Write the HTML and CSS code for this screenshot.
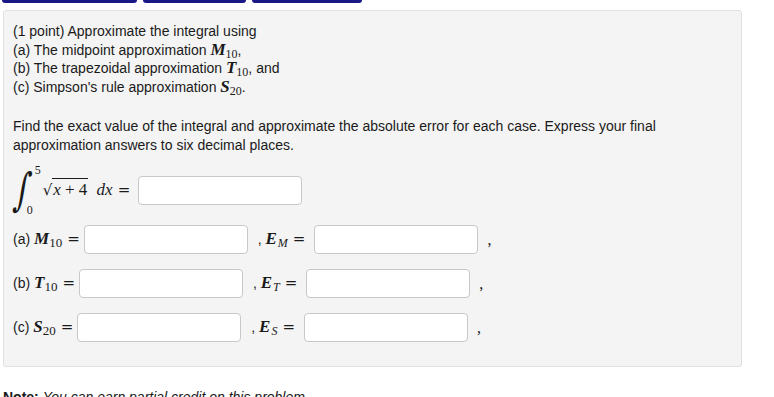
FILE: index.html
```html
<!DOCTYPE html>
<html lang="en">

<head>
  <meta charset="UTF-8" />
  <meta name="viewport" content="width=device-width, initial-scale=1.0" />
  <title>Problem</title>
  <link rel="stylesheet" href="styles.css">
</head>

<body>
  <div class="page">
    <!-- bottoms of the nav buttons above the problem -->
    <div class="nav-buttons">
      <span class="nav-btn btn-1"></span>
      <span class="nav-btn btn-2"></span>
      <span class="nav-btn btn-3"></span>
    </div>

    <div class="problem">
      <p class="intro">
        (1 point) Approximate the integral using<br>
        (a) The midpoint approximation <span class="math"><i class="var">M</i><sub>10</sub></span>,<br>
        (b) The trapezoidal approximation <span class="math"><i class="var">T</i><sub>10</sub></span>, and<br>
        (c) Simpson's rule approximation <span class="math"><i class="var">S</i><sub>20</sub></span>.
      </p>

      <p class="task">
        Find the exact value of the integral and approximate the absolute error for each case. Express your final
        approximation answers to six decimal places.
      </p>

      <div class="integral-row">
        <span class="integral">
          <span class="int-sign">∫</span>
          <span class="limits">
            <span class="upper">5</span>
            <span class="lower">0</span>
          </span>
        </span>
        <span class="math expr">
          <span class="root">√</span><span class="radicand"><i>x</i> + 4</span>
          <i class="dx">dx</i><span class="eq">=</span>
        </span>
        <input class="answer" type="text" aria-label="exact value">
      </div>

      <div class="answer-row">
        <span class="label">(a) <span class="math"><i class="var">M</i><span class="sub">10</span><span class="eq">=</span></span></span>
        <input class="answer" type="text" aria-label="M10">
        <span class="sep">, <span class="math"><i class="var">E</i><i class="sub-i">M</i><span class="eq">=</span></span></span>
        <input class="answer" type="text" aria-label="EM">
        <span class="comma">,</span>
      </div>

      <div class="answer-row">
        <span class="label">(b) <span class="math"><i class="var">T</i><span class="sub">10</span><span class="eq">=</span></span></span>
        <input class="answer" type="text" aria-label="T10">
        <span class="sep">, <span class="math"><i class="var">E</i><i class="sub-i">T</i><span class="eq">=</span></span></span>
        <input class="answer" type="text" aria-label="ET">
        <span class="comma">,</span>
      </div>

      <div class="answer-row">
        <span class="label">(c) <span class="math"><i class="var">S</i><span class="sub">20</span><span class="eq">=</span></span></span>
        <input class="answer" type="text" aria-label="S20">
        <span class="sep">, <span class="math"><i class="var">E</i><i class="sub-i">S</i><span class="eq">=</span></span></span>
        <input class="answer" type="text" aria-label="ES">
        <span class="comma">,</span>
      </div>
    </div>

    <p class="note"><b>Note:</b> <i>You can earn partial credit on this problem.</i></p>
  </div>
</body>

</html>
```

FILE: styles.css
```css
/* Global */
body {
  margin: 0;
  font-family: "Liberation Sans", Arial, sans-serif;
  font-size: 14px;
  color: #1a1a1a;
  background: #fff;
}

.page {
  padding: 0 32px 0 3px;
}

/* Nav buttons (only the bottoms show) */
.nav-buttons {
  display: flex;
  height: 3px;
  margin-left: -1px;
}

.nav-btn {
  display: block;
  height: 3px;
  background-color: #1b1885;
  border-radius: 0 0 4px 4px;
  margin-right: 6px;
}

.btn-1 { width: 135px; }
.btn-2 { width: 103px; }
.btn-3 { width: 110px; }

/* Problem box */
.problem {
  margin-top: 7px;
  background-color: #f4f4f4;
  border: 1px solid #e0e0e0;
  border-radius: 3px;
  padding: 11px 9px 24px 9px;
}

p {
  margin: 0;
  line-height: 18.5px;
}

.intro {
  margin-bottom: 21px;
}

.task {
  max-width: 660px;
  margin-bottom: 14px;
}

/* Math */
.math {
  font-family: "Liberation Serif", "Times New Roman", serif;
  font-size: 17px;
  line-height: 10px;
  white-space: nowrap;
}

.var {
  font-weight: bold;
}

.math sub {
  font-size: 12px;
  font-style: normal;
  line-height: 0;
  vertical-align: -3px;
}

.sub {
  font-size: 13px;
  vertical-align: -3px;
}

.sub-i {
  font-size: 12px;
  vertical-align: -3px;
  margin-left: 1px;
}

.eq {
  font-family: "DejaVu Serif", serif;
  font-size: 15px;
  margin-left: 5px;
}

/* Integral */
.integral-row {
  display: flex;
  align-items: center;
  height: 44px;
}

.integral {
  display: inline-flex;
  align-items: stretch;
  height: 44px;
  margin-right: 2px;
}

.int-sign {
  font-family: "DejaVu Serif", serif;
  font-size: 30px;
  line-height: 44px;
  transform: scaleY(1.5) skewX(-12deg);
  margin-left: 2px;
}

.limits {
  display: flex;
  flex-direction: column;
  justify-content: space-between;
  font-family: "Liberation Serif", serif;
  font-size: 12px;
  line-height: 12px;
}

.upper {
  margin-left: 4px;
  margin-top: -4px;
}

.lower {
  margin-left: -4px;
  margin-bottom: -4px;
}

.expr {
  margin-right: 8px;
}

.root {
  font-family: "DejaVu Serif", serif;
  font-size: 15px;
}

.radicand {
  border-top: 1px solid #1a1a1a;
  padding: 1px 1px 0;
}

.dx {
  margin-left: 4px;
}

/* Answer inputs */
.answer {
  width: 164px;
  height: 29px;
  box-sizing: border-box;
  border: 1px solid #c8c8c8;
  border-radius: 4px;
  background: #fff;
  padding: 4px 6px;
  font-size: 13px;
}

.answer-row {
  display: flex;
  align-items: center;
  margin-top: 15px;
}

.integral-row + .answer-row {
  margin-top: 13px;
}

.label {
  margin-right: 4px;
}

.sep {
  margin: 0 9px 0 10px;
}

.comma {
  font-family: "Liberation Serif", serif;
  font-size: 16px;
  margin-left: 9px;
}

/* Note */
.note {
  margin-top: 21px;
}
```
